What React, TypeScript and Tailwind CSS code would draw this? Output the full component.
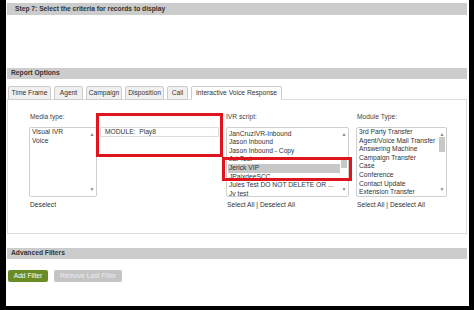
const font = { fontFamily: '"Liberation Sans", Arial, sans-serif' };

const TABS = [
  { label: "Time Frame", w: "w-[43px]" },
  { label: "Agent", w: "w-[29px]" },
  { label: "Campaign", w: "w-[36px]" },
  { label: "Disposition", w: "w-[39px]" },
  { label: "Call", w: "w-[21px]" },
  { label: "Interactive Voice Response", w: "w-[91px]", active: true },
];

const IVR_SCRIPTS = [
  "Jaime Test",
  "JanCruzIVR-Inbound",
  "Jason Inbound",
  "Jason Inbound - Copy",
  "Jat Test",
  "Jerick VIP",
  "JPaixdeeSCC",
  "Jules Test DO NOT DELETE OR ...",
  "Jv test",
];

const MODULE_TYPES = [
  "3rd Party Transfer",
  "Agent/Voice Mail Transfer",
  "Answering Machine",
  "Campaign Transfer",
  "Case",
  "Conference",
  "Contact Update",
  "Extension Transfer",
];

function Scrollbar({ thumb }: { thumb?: string }) {
  return (
    <div className="relative flex w-[8px] shrink-0 flex-col items-center justify-between py-[4px] text-[5px] leading-none text-[#888]">
      <span>▲</span>
      {thumb ? (
        <div className={`absolute left-[1px] w-[6px] bg-[#c8c8c8] ${thumb}`} />
      ) : null}
      <span>▼</span>
    </div>
  );
}

export default function App() {
  return (
    <div className="flex h-[310px] w-[474px] bg-black" style={font}>
      <div className="relative ml-[6px] h-[306px] w-[463px] bg-white pl-[1px] pt-[3px]">
        <div className="flex h-[12px] w-[460px] items-center bg-[#cccccc] pl-[8px] text-[6.7px] font-bold text-[#333]">
          Step 7: Select the criteria for records to display
        </div>

        <div className="mt-[53px] flex h-[11px] w-[460px] items-center bg-[#cccccc] pl-[4px] text-[6.7px] font-bold text-[#333]">
          Report Options
        </div>

        {/* tabs */}
        <div className="mt-[7px] flex h-[13px] gap-[3px] pl-[1px]">
          {TABS.map((tab) => (
            <div
              key={tab.label}
              className={`relative z-10 -mb-px flex h-[14px] ${tab.w} items-center justify-center rounded-t-[2px] border border-[#cccccc] text-[6.7px] text-[#333] ${
                tab.active ? "border-b-white bg-white" : "bg-[#f0f0f0]"
              }`}
            >
              {tab.label}
            </div>
          ))}
        </div>

        {/* tab panel */}
        <div className="h-[135px] w-[460px] border border-[#dddddd] pt-[13px] text-[6.7px] text-[#333]">
          <div className="flex">
            {/* media type */}
            <div className="ml-[21px] w-[68px]">
              <div className="h-[8px] pl-[1px] leading-[8px] text-[#444]">Media type:</div>
              <div className="mt-[6px] flex h-[70px] rounded-[2px] border border-[#cfcfcf]">
                <div className="flex-1 pl-[2px] leading-[8.6px]">
                  <div>Visual IVR</div>
                  <div>Voice</div>
                </div>
                <Scrollbar />
              </div>
              <div className="mt-[4px] pl-[1px] leading-[8px]">Deselect</div>
            </div>

            {/* module search */}
            <div className="w-[129px]">
              <div className="ml-[3px] mt-[14px] flex h-[10px] w-[119px] items-center border border-[#dddddd] pl-[4px]">
                MODULE:&nbsp;&nbsp;Play8
              </div>
            </div>

            {/* IVR script, list is scrolled so the first row is cut */}
            <div className="w-[123px]">
              <div className="h-[8px] leading-[8px] text-[#444]">IVR script:</div>
              <div className="mt-[6px] flex h-[70px] overflow-hidden rounded-[2px] border border-[#cfcfcf]">
                <div className="flex-1 overflow-hidden pl-[1px]">
                  <div className="-mt-[7px] leading-[8.6px]">
                    {IVR_SCRIPTS.map((s) => (
                      <div
                        key={s}
                        className={`whitespace-nowrap pl-[1px] ${s === "Jerick VIP" ? "bg-[#c8c8c8]" : ""}`}
                      >
                        {s}
                      </div>
                    ))}
                  </div>
                </div>
                <Scrollbar thumb="top-[32px] h-[8px]" />
              </div>
              <div className="mt-[4px] pl-[1px] leading-[8px]">Select All | Deselect All</div>
            </div>

            {/* module type */}
            <div className="ml-[7px] w-[91px]">
              <div className="h-[8px] pl-[1px] leading-[8px] text-[#444]">Module Type:</div>
              <div className="mt-[6px] flex h-[70px] overflow-hidden rounded-[2px] border border-[#cfcfcf]">
                <div className="flex-1 overflow-hidden whitespace-nowrap pl-[2px] leading-[8.6px]">
                  {MODULE_TYPES.map((m) => (
                    <div key={m}>{m}</div>
                  ))}
                </div>
                <Scrollbar thumb="top-[9px] h-[15px]" />
              </div>
              <div className="mt-[4px] pl-[1px] leading-[8px]">Select All | Deselect All</div>
            </div>
          </div>
        </div>

        <div className="mt-[14px] flex h-[11px] w-[460px] items-center bg-[#cccccc] pl-[4px] text-[6.7px] font-bold text-[#333]">
          Advanced Filters
        </div>

        <div className="mt-[11px] flex gap-[6px] pl-[1px]">
          <button
            type="button"
            className="flex h-[12px] w-[40px] items-center justify-center rounded-[2px] bg-[#6b8c25] text-[6.7px] text-white"
          >
            Add Filter
          </button>
          <button
            type="button"
            className="flex h-[12px] w-[68px] items-center justify-center rounded-[2px] bg-[#c4c4c4] text-[6.7px] text-[#ececec]"
          >
            Remove Last Filter
          </button>
        </div>

        {/* red annotation boxes */}
        <div className="absolute left-[90px] top-[113px] h-[44px] w-[127px] border-[3px] border-[#e0141c]" />
        <div className="absolute left-[216px] top-[157px] h-[24px] w-[130px] border-[3px] border-[#e0141c]" />
      </div>
    </div>
  );
}
